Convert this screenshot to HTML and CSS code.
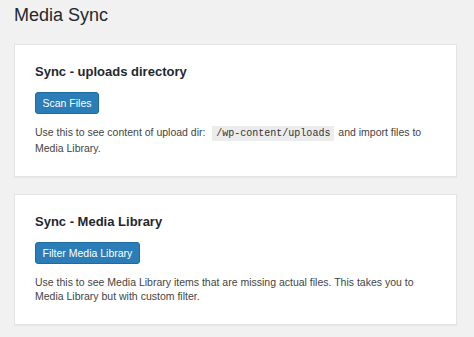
FILE: index.html
```html
<!DOCTYPE html>
<html lang="en">
<head>
    <meta charset="UTF-8">
    <meta name="viewport" content="width=device-width, initial-scale=1.0">
    <title>Media Sync</title>
    <link rel="stylesheet" href="styles.css">
</head>
<body>

<div class="wrap">
    <h1>Media Sync</h1>

    <!-- Uploads directory -->
    <div class="card">
        <h2>Sync - uploads directory</h2>
        <button class="button-primary">Scan Files</button>
        <p>Use this to see content of upload dir: <code>/wp-content/uploads</code> and import files to Media Library.</p>
    </div>

    <!-- Media Library -->
    <div class="card">
        <h2>Sync - Media Library</h2>
        <button class="button-primary">Filter Media Library</button>
        <p>Use this to see Media Library items that are missing actual files. This takes you to Media Library but with custom filter.</p>
    </div>
</div>

</body>
</html>
```

FILE: styles.css
```css
* {
    margin: 0;
    padding: 0;
    box-sizing: border-box;
}
body {
    background: #f1f1f1;
    color: #444;
    font-family: "Liberation Sans", Arial, sans-serif;
    font-size: 10.5px;
}
.wrap {
    padding: 0 17px 0 14px;
}
h1 {
    font-size: 18px;
    font-weight: 400;
    line-height: 22px;
    color: #23282d;
    margin: 4px 0 18px;
}
.card {
    background: #fff;
    border: 1px solid #e3e4e6;
    box-shadow: 0 1px 1px rgba(0, 0, 0, 0.04);
    padding: 18px 20px 21px;
    margin-bottom: 17px;
}
.card h2 {
    font-size: 13px;
    font-weight: 700;
    line-height: 18px;
    color: #23282d;
    margin-bottom: 11px;
}
.button-primary {
    display: inline-block;
    height: 22px;
    padding: 0 6.5px;
    font-family: "Liberation Sans", Arial, sans-serif;
    font-size: 10.5px;
    line-height: 20px;
    color: #fff;
    background: #2a7db6;
    border: 1px solid #1f6a9e;
    border-radius: 3px;
    cursor: pointer;
}
.card p {
    margin-top: 11px;
    line-height: 14px;
}
.card code {
    font-family: "Liberation Mono", monospace;
    font-size: 10px;
    background: #ececec;
    padding: 2px 4px;
    margin: 0 1px 0 4px;
    color: #333;
}
```
